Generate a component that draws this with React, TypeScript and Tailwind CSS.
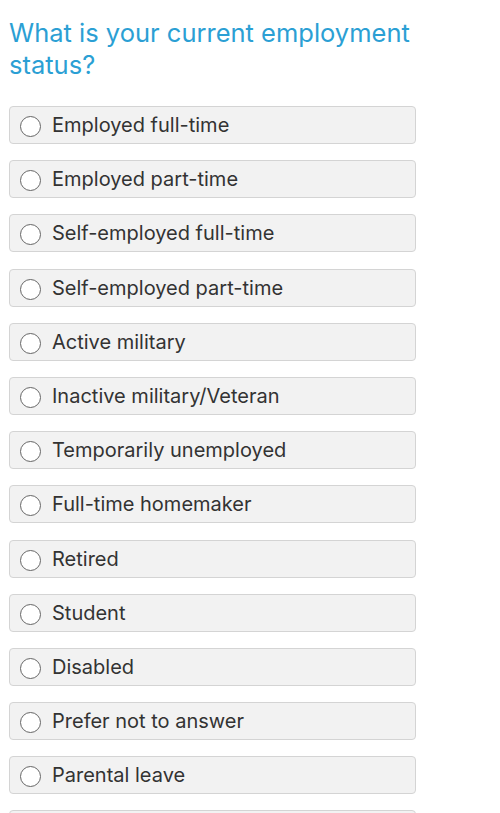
const options = [
  'Employed full-time',
  'Employed part-time',
  'Self-employed full-time',
  'Self-employed part-time',
  'Active military',
  'Inactive military/Veteran',
  'Temporarily unemployed',
  'Full-time homemaker',
  'Retired',
  'Student',
  'Disabled',
  'Prefer not to answer',
  'Parental leave',
  '',
];

const App = () => {
  return (
    <div className="min-h-screen bg-white px-[9px] pt-[17px]" style={{ fontFamily: 'Inter, sans-serif' }}>
      <h1 className="text-[25.5px] leading-[32px] text-[#2b9fd4] font-normal w-[410px]">
        What is your current employment status?
      </h1>
      <div className="mt-[25px] flex flex-col gap-[16.2px] w-[407px]">
        {options.map((opt, i) => (
          <label
            key={i}
            className="flex items-center h-[38px] bg-[#f2f2f2] border border-[#d4d4d4] rounded-[4px] pl-[10px]"
          >
            <span className="w-[21px] h-[21px] rounded-full border border-[#666] bg-white mt-[3px] shrink-0" />
            <span className="ml-[11px] text-[20px] text-[#333]">{opt}</span>
          </label>
        ))}
      </div>
    </div>
  );
};

export default App;
